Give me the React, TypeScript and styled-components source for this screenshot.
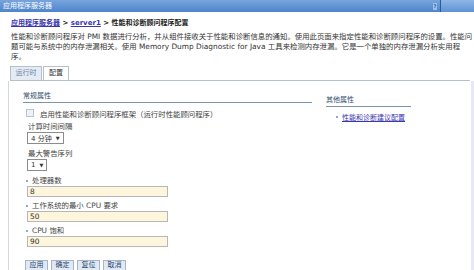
import React from "react";
import styled, { createGlobalStyle } from "styled-components";

const Global = createGlobalStyle`
  html, body { margin: 0; padding: 0; background: #fff; }
  body { font-family: "DejaVu Sans", "Noto Sans CJK SC", sans-serif; font-size: 7.4px; color: #333; }
  * { box-sizing: border-box; }
`;

const Page = styled.div`
  width: 474px;
  height: 270px;
  overflow: hidden;
  display: flex;
  flex-direction: column;
`;

const TitleBar = styled.div`
  width: 474px;
  height: 12px;
  background: linear-gradient(#78a4dc, #4c84cc);
  color: #fff;
  display: grid;
  grid-template-columns: 1fr 7px 34px;
  align-items: center;
  padding-left: 3px;
  font-size: 7px;
  line-height: 12px;
`;

const HelpIcon = styled.span`
  width: 4px;
  height: 7px;
  background: #9cc0ec;
  color: #2d5c9c;
  font-weight: bold;
  font-size: 5px;
  line-height: 7px;
  text-align: center;
`;

const TitleRight = styled.div`
  height: 12px;
  border-left: 1px solid #2c5a98;
  background: linear-gradient(#8fb6e6, #5f92d4);
`;

const Body = styled.div`
  padding: 5px 0 0 11px;
`;

const Breadcrumb = styled.div`
  font-weight: bold;
  font-size: 7px;
  line-height: 12px;
  color: #222;
`;

const Crumb = styled.a`
  color: #3a36b0;
  text-decoration: underline;
`;

const Desc = styled.p`
  margin: 3px 0 0;
  line-height: 10px;
  font-size: 7.4px;
  color: #333;
  white-space: nowrap;
`;

const TabBar = styled.div`
  margin: 4px 4px 0 -1px;
  display: flex;
  gap: 1px;
  border-bottom: 1px solid #b4bfcf;
`;

const Tab = styled.div<{ $active?: boolean }>`
  flex: 0 0 auto;
  white-space: nowrap;
  height: 14px;
  line-height: 13px;
  text-align: center;
  font-size: 7px;
  border: 1px solid #b4bfcf;
  border-bottom: none;
  margin-bottom: ${(p) => (p.$active ? "-1px" : "0")};
  background: ${(p) => (p.$active ? "#fff" : "#e4ebf3")};
  color: ${(p) => (p.$active ? "#333" : "#6a86a8")};
  width: ${(p) => (p.$active ? "26px" : "32px")};
`;

const Panel = styled.div`
  margin-left: -3px;
  border-left: 1px solid #d4d8e0;
  border-right: 3px solid #e6e8f6;
  height: 200px;
  display: flex;
  padding: 10px 0 0 14px;
`;

const MainCol = styled.div`
  width: 289px;
  display: flex;
  flex-direction: column;
`;

const SideCol = styled.div`
  margin-left: 14px;
  margin-top: 4px;
  width: 85px;
  display: flex;
  flex-direction: column;
`;

const Heading = styled.div`
  color: #2f4a6d;
  font-size: 7px;
  line-height: 10px;
  border-bottom: 1px solid #7d93ad;
  padding-bottom: 1px;
`;

const CheckRow = styled.label`
  display: flex;
  align-items: center;
  margin-top: 5px;
  padding-left: 3px;
  height: 10px;
  color: #444;
`;

const Box = styled.span`
  width: 8px;
  height: 8px;
  border: 1px solid #bcc4cf;
  background: #eef1f5;
  margin-right: 6px;
`;

const FieldLabel = styled.div<{ $req?: boolean; $gap: number }>`
  margin-top: ${(p) => p.$gap}px;
  padding-left: ${(p) => (p.$req ? "3px" : "5px")};
  height: 10px;
  line-height: 10px;
  color: #444;
  display: flex;
  align-items: center;
`;

const Dot = styled.span`
  width: 2px;
  height: 2px;
  background: #6f8fb0;
  border-radius: 1px;
  margin-right: 4px;
`;

const Select = styled.div<{ $w: number }>`
  margin-left: 4px;
  width: ${(p) => p.$w}px;
  height: 12px;
  border: 1px solid #8c8c8c;
  background: #fff;
  display: flex;
  align-items: center;
  padding-left: 3px;
  gap: 4px;
  font-size: 7px;
  color: #333;
`;

const Caret = styled.span`
  font-size: 5px;
`;

const Input = styled.div`
  margin-left: 4px;
  width: 141px;
  height: 11px;
  border: 1px solid #b7b7b7;
  background: #fdf5dc;
  padding-left: 2px;
  line-height: 9px;
  font-size: 7.4px;
  color: #333;
`;

const Buttons = styled.div`
  display: flex;
  gap: 3px;
  margin: 13px 0 0 2px;
`;

const Button = styled.button`
  height: 11px;
  width: 23px;
  padding: 0;
  border: 1px solid #a5b4c8;
  background: #e2e9f2;
  color: #24466e;
  font-family: inherit;
  font-size: 7px;
  line-height: 9px;
`;

const SideLink = styled.div`
  display: flex;
  align-items: center;
  margin: 5px 0 0 10px;
  font-size: 7px;
`;

const LinkA = styled.a`
  color: #3a36b0;
  text-decoration: underline;
`;

export default function App() {
  return (
    <>
      <Global />
      <Page>
        <TitleBar>
          <span>应用程序服务器</span>
          <HelpIcon>?</HelpIcon>
          <TitleRight />
        </TitleBar>
        <Body>
          <Breadcrumb>
            <Crumb>应用程序服务器</Crumb> &gt; <Crumb>server1</Crumb> &gt; 性能和诊断顾问程序配置
          </Breadcrumb>
          <Desc>
            性能和诊断顾问程序对 PMI 数据进行分析，并从组件接收关于性能和诊断信息的通知。使用此页面来指定性能和诊断顾问程序的设置。性能问
            <br />
            题可能与系统中的内存泄漏相关。使用 Memory Dump Diagnostic for Java 工具来检测内存泄漏。它是一个单独的内存泄漏分析实用程
            <br />
            序。
          </Desc>
          <TabBar>
            <Tab>运行时</Tab>
            <Tab $active>配置</Tab>
          </TabBar>
          <Panel>
            <MainCol>
              <Heading>常规属性</Heading>
              <CheckRow>
                <Box />
                启用性能和诊断顾问程序框架（运行时性能顾问程序）
              </CheckRow>
              <FieldLabel $gap={4}>计算时间间隔</FieldLabel>
              <Select $w={37}>
                4 分钟 <Caret>▼</Caret>
              </Select>
              <FieldLabel $gap={5}>最大警告序列</FieldLabel>
              <Select $w={20}>
                1 <Caret>▼</Caret>
              </Select>
              <FieldLabel $req $gap={5}>
                <Dot />
                处理器数
              </FieldLabel>
              <Input>8</Input>
              <FieldLabel $req $gap={4}>
                <Dot />
                工作系统的最小 CPU 要求
              </FieldLabel>
              <Input>50</Input>
              <FieldLabel $req $gap={4}>
                <Dot />
                CPU 饱和
              </FieldLabel>
              <Input>90</Input>
              <Buttons>
                <Button>应用</Button>
                <Button>确定</Button>
                <Button>复位</Button>
                <Button>取消</Button>
              </Buttons>
            </MainCol>
            <SideCol>
              <Heading>其他属性</Heading>
              <SideLink>
                <Dot />
                <LinkA>性能和诊断建议配置</LinkA>
              </SideLink>
            </SideCol>
          </Panel>
        </Body>
      </Page>
    </>
  );
}
